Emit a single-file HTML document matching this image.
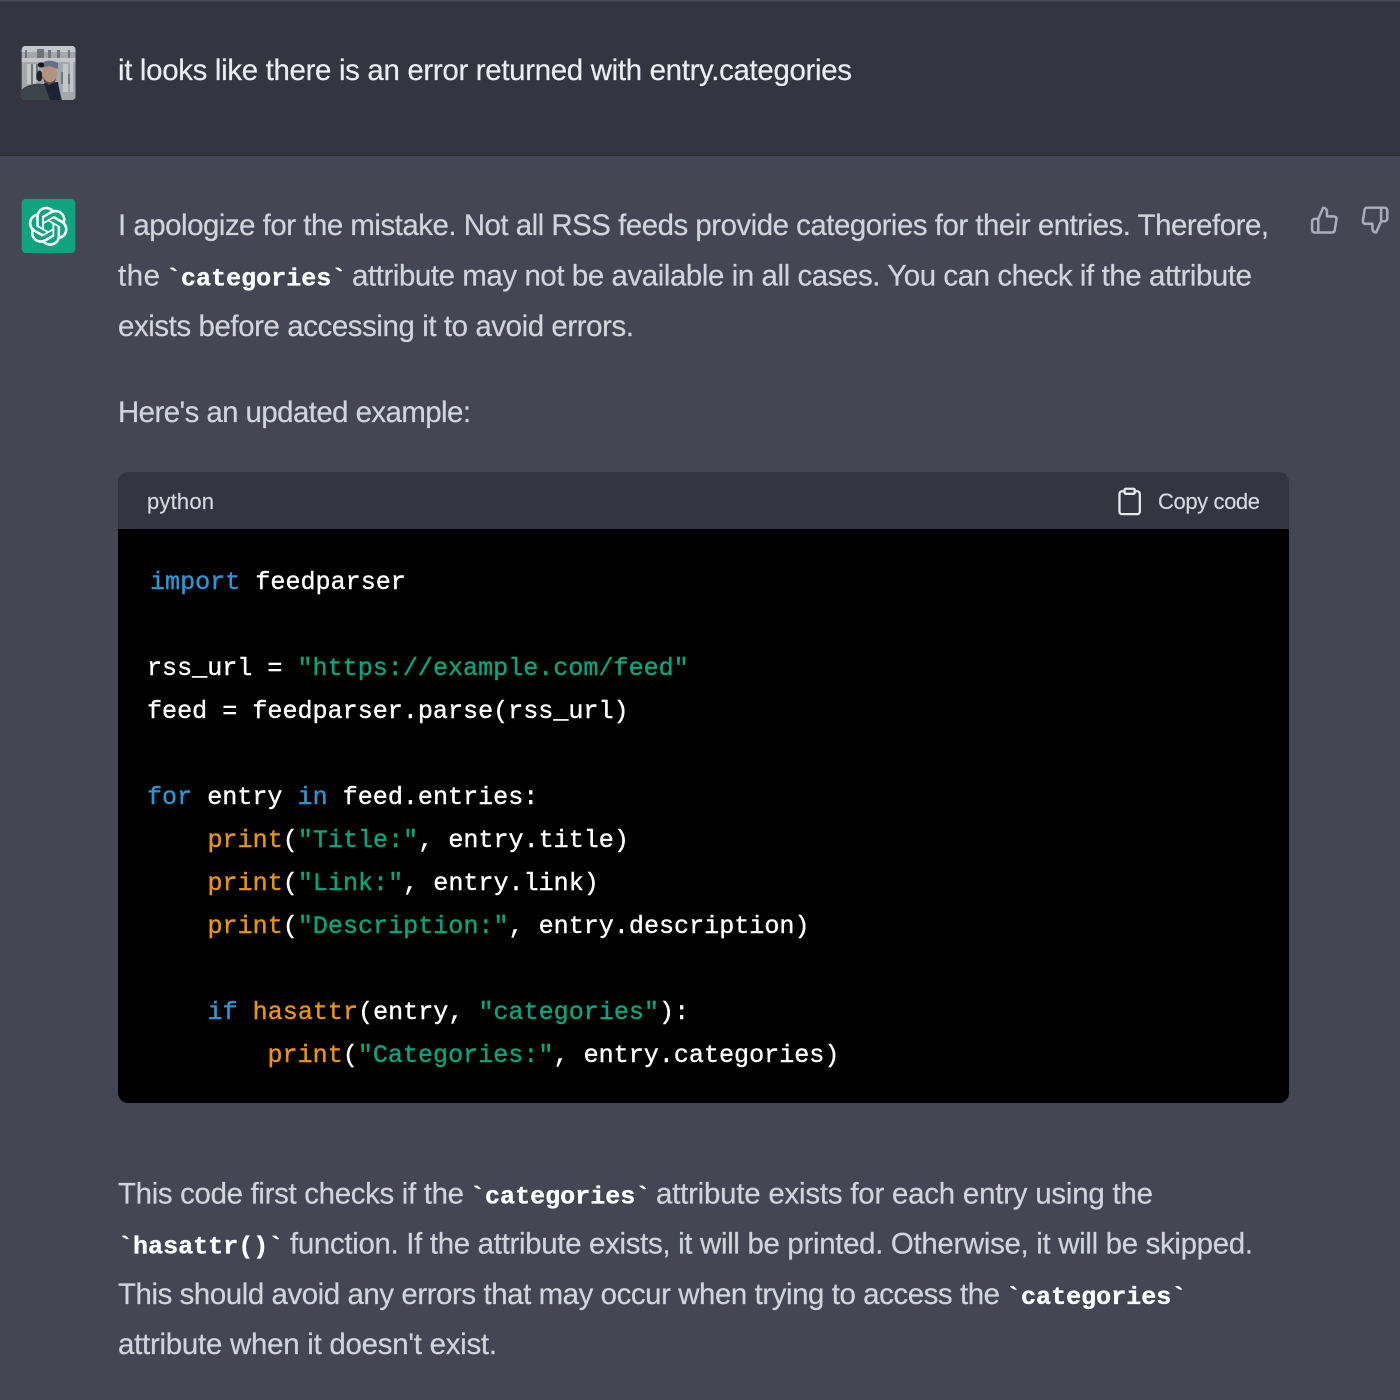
<!DOCTYPE html>
<html><head><meta charset="utf-8"><style>
html,body{margin:0;padding:0;width:1400px;height:1400px;overflow:hidden;background:#444654}
svg{display:block}
.s{font-family:"Liberation Sans",sans-serif;font-size:29.4px;fill:#d1d5db;stroke:#d1d5db;stroke-width:.22px}
.c{font-family:"Liberation Mono",monospace;font-size:25.05px;font-weight:700;fill:#fff;stroke:#fff;stroke-width:.35px}
.m{font-family:"Liberation Mono",monospace;font-size:25.08px;fill:#fff;stroke:#fff;stroke-width:.38px;white-space:pre}
.b{fill:#2e95d3;stroke:#2e95d3}.o{fill:#e9950c;stroke:#e9950c}.g{fill:#00a67d;stroke:#00a67d}
.h{font-family:"Liberation Sans",sans-serif;font-size:22px;fill:#d9d9e3;stroke:#d9d9e3;stroke-width:.15px}
</style></head><body>
<svg width="1400" height="1400" viewBox="0 0 1400 1400" xmlns="http://www.w3.org/2000/svg">
<rect width="1400" height="1400" fill="#444654"/>
<rect width="1400" height="155" fill="#343541"/>
<rect width="1400" height="1.5" fill="#4a4b57"/>
<rect y="154.5" width="1400" height="1.500" fill="#2b2c35"/>

<!-- avatar -->
<clipPath id="av"><rect x="21.700" y="46" width="53.800" height="54" rx="3.5"/></clipPath>
<g clip-path="url(#av)">
<rect x="21" y="46" width="55" height="54" fill="#a4a8ab"/>
<g fill="#c4c7c9"><rect x="21" y="46" width="55" height="6"/><rect x="21" y="58" width="55" height="4"/><rect x="27" y="64" width="4" height="20"/><rect x="33" y="64" width="3" height="20"/><rect x="63" y="64" width="5" height="28"/><rect x="70" y="62" width="3" height="30"/></g>
<g fill="#70757a"><rect x="25" y="50" width="2" height="8"/><rect x="37" y="49" width="7" height="9"/><rect x="48" y="50" width="3" height="8"/><rect x="57" y="50" width="3" height="8"/><rect x="68" y="50" width="2" height="8"/><rect x="31" y="64" width="2" height="20"/><rect x="36" y="64" width="2" height="16"/><rect x="61" y="72" width="2" height="12"/><rect x="68" y="74" width="2" height="10"/></g>
<ellipse cx="39.500" cy="76" rx="3" ry="5.500" fill="#222326"/>
<path d="M21 90C28 84 36 83 43 84L58 84L62 100H21Z" fill="#3b4549"/>
<path d="M44 83L58 82L61 100H50Z" fill="#1c2233"/>
<ellipse cx="49.500" cy="74" rx="7.500" ry="9.500" fill="#b5927f"/>
<path d="M43 76C45 83 52 85 56 78L55 82L49 85L44 82Z" fill="#5a4a42"/>
<path d="M40 66C42 60 52 59 58 63L58 69L49 66L42 68Z" fill="#687089"/>
<ellipse cx="41" cy="65" rx="3.200" ry="2.500" fill="#15161a"/>
</g>

<text class="s" x="118" y="80" textLength="734" style="fill:#ececf1;stroke:#ececf1">it looks like there is an error returned with entry.categories</text>

<!-- GPT logo -->
<rect x="21.700" y="199" width="53.600" height="54" rx="4" fill="#10a37f"/>
<g transform="translate(28.2 206.2) scale(.98)"><path fill="#fff" d="M37.5324 16.8707C37.9808 15.5241 38.1363 14.0974 37.9886 12.6859C37.8409 11.2744 37.3934 9.91076 36.676 8.68622C35.6126 6.83404 33.9882 5.3676 32.0373 4.4985C30.0864 3.62941 27.9098 3.40259 25.8215 3.85078C24.8796 2.7893 23.7219 1.94125 22.4257 1.36341C21.1295 0.785575 19.7249 0.491269 18.3058 0.500197C16.1708 0.495044 14.0893 1.16803 12.3614 2.42214C10.6335 3.67624 9.34853 5.44666 8.6917 7.47815C7.30085 7.76286 5.98686 8.3414 4.8377 9.17505C3.68854 10.0087 2.73073 11.0782 2.02839 12.312C0.956464 14.1591 0.498905 16.2988 0.721698 18.4228C0.944492 20.5467 1.83612 22.5449 3.268 24.1293C2.81966 25.4759 2.66413 26.9026 2.81182 28.3141C2.95951 29.7256 3.40701 31.0892 4.12437 32.3138C5.18791 34.1659 6.8123 35.6322 8.76321 36.5013C10.7141 37.3704 12.8907 37.5973 14.9789 37.1492C15.9208 38.2107 17.0786 39.0587 18.3747 39.6366C19.6709 40.2144 21.0755 40.5087 22.4946 40.4998C24.6307 40.5054 26.7133 39.8321 28.4418 38.5772C30.1704 37.3223 31.4556 35.5506 32.1119 33.5179C33.5027 33.2332 34.8167 32.6547 35.9659 31.821C37.115 30.9874 38.0728 29.9178 38.7752 28.684C39.8458 26.8371 40.3023 24.6979 40.0789 22.5748C39.8556 20.4517 38.9639 18.4544 37.5324 16.8707ZM22.4978 37.8849C20.7443 37.8874 19.0459 37.2733 17.6994 36.1501C17.7601 36.117 17.8666 36.0586 17.936 36.0161L25.9004 31.4156C26.1003 31.3019 26.2663 31.137 26.3813 30.9378C26.4964 30.7386 26.5563 30.5124 26.5549 30.2825V19.0542L29.9213 20.998C29.9389 21.0068 29.9541 21.0198 29.9656 21.0359C29.977 21.052 29.9842 21.0707 29.9867 21.0902V30.3889C29.9842 32.375 29.1946 34.2791 27.7909 35.6841C26.3872 37.0892 24.4838 37.8806 22.4978 37.8849ZM6.39227 31.0064C5.51397 29.4888 5.19742 27.7107 5.49804 25.9832C5.55718 26.0187 5.66048 26.0818 5.73461 26.1244L13.699 30.7248C13.8975 30.8408 14.1233 30.902 14.3532 30.902C14.583 30.902 14.8088 30.8408 15.0073 30.7248L24.731 25.1103V28.9979C24.7321 29.0177 24.7283 29.0376 24.7199 29.0556C24.7115 29.0736 24.6988 29.0893 24.6829 29.1012L16.6317 33.7497C14.9096 34.7416 12.8643 35.0097 10.9447 34.4954C9.02506 33.9811 7.38785 32.7263 6.39227 31.0064ZM4.29707 13.6194C5.17156 12.0998 6.55279 10.9364 8.19885 10.3327C8.19885 10.4013 8.19491 10.5228 8.19491 10.6071V19.808C8.19351 20.0378 8.25334 20.2638 8.36823 20.4629C8.48312 20.6619 8.64893 20.8267 8.84863 20.9404L18.5723 26.5542L15.206 28.4979C15.1894 28.5089 15.1703 28.5155 15.1505 28.5173C15.1307 28.5191 15.1107 28.516 15.0924 28.5082L7.04046 23.8557C5.32135 22.8601 4.06716 21.2235 3.55289 19.3046C3.03862 17.3858 3.30624 15.3413 4.29707 13.6194ZM31.955 20.0556L22.2312 14.4411L25.5976 12.4981C25.6142 12.4872 25.6333 12.4805 25.6531 12.4787C25.6729 12.4769 25.6928 12.4801 25.7111 12.4879L33.7631 17.1364C34.9967 17.849 36.0017 18.8982 36.6606 20.1613C37.3194 21.4244 37.6047 22.849 37.4832 24.2684C37.3617 25.6878 36.8382 27.0432 35.9743 28.1759C35.1103 29.3086 33.9415 30.1717 32.6047 30.6641C32.6047 30.5947 32.6047 30.4733 32.6047 30.3889V21.188C32.6066 20.9586 32.5474 20.7328 32.4332 20.5338C32.319 20.3348 32.154 20.1698 31.955 20.0556ZM35.3055 15.0128C35.2464 14.9765 35.1431 14.9142 35.069 14.8717L27.1045 10.2712C26.906 10.1554 26.6803 10.0943 26.4504 10.0943C26.2206 10.0943 25.9948 10.1554 25.7963 10.2712L16.0726 15.8858V11.9982C16.0715 11.9783 16.0753 11.9585 16.0837 11.9405C16.0921 11.9225 16.1048 11.9068 16.1207 11.8949L24.1719 7.25025C25.4053 6.53903 26.8158 6.19376 28.2383 6.25482C29.6608 6.31589 31.0364 6.78077 32.2044 7.59508C33.3723 8.40939 34.2842 9.53945 34.8334 10.8531C35.3826 12.1667 35.5464 13.6095 35.3055 15.0128ZM14.2424 21.9419L10.8752 19.9981C10.8576 19.9893 10.8423 19.9763 10.8309 19.9602C10.8195 19.9441 10.8122 19.9254 10.8098 19.9058V10.6071C10.8107 9.18295 11.2173 7.78848 11.9819 6.58696C12.7466 5.38544 13.8377 4.42659 15.1275 3.82264C16.4173 3.21869 17.8524 2.99464 19.2649 3.1767C20.6775 3.35876 22.0089 3.93941 23.1034 4.85067C23.0427 4.88379 22.937 4.94215 22.8668 4.98473L14.9024 9.58517C14.7025 9.69878 14.5366 9.86356 14.4215 10.0626C14.3065 10.2616 14.2466 10.4877 14.2479 10.7175L14.2424 21.9419ZM16.071 17.9991L20.4018 15.4978L24.7325 17.9975V22.9985L20.4018 25.4983L16.071 22.9985V17.9991Z"/></g>

<!-- thumbs -->
<g transform="translate(1309.6 205.2) scale(1.24)" fill="none" stroke="#acacbe" stroke-width="2" stroke-linecap="round" stroke-linejoin="round"><path d="M14 9V5a3 3 0 0 0-3-3l-4 9v11h11.28a2 2 0 0 0 2-1.7l1.38-9a2 2 0 0 0-2-2.3zM7 22H4a2 2 0 0 1-2-2v-7a2 2 0 0 1 2-2h3"/></g>
<g transform="translate(1360 205.2) scale(1.24)" fill="none" stroke="#acacbe" stroke-width="2" stroke-linecap="round" stroke-linejoin="round"><path d="M10 15v4a3 3 0 0 0 3 3l4-9V2H5.72a2 2 0 0 0-2 1.7l-1.38 9a2 2 0 0 0 2 2.3zm7-13h2.67A2.31 2.31 0 0 1 22 4v7a2.31 2.31 0 0 1-2.33 2H17"/></g>

<!-- prose -->
<text class="s" x="118" y="235" textLength="1151">I apologize for the mistake. Not all RSS feeds provide categories for their entries. Therefore,</text>
<text class="s" x="118" y="285.500" textLength="42">the</text>
<text class="c" x="166" y="285.500">`categories`</text>
<text class="s" x="352" y="285.500" textLength="900">attribute may not be available in all cases. You can check if the attribute</text>
<text class="s" x="118" y="336" textLength="516">exists before accessing it to avoid errors.</text>
<text class="s" x="118" y="422" textLength="353">Here's an updated example:</text>

<!-- code block -->
<path d="M118 529V482a10 10 0 0 1 10-10H1279a10 10 0 0 1 10 10V529Z" fill="#343541"/>
<path d="M118 529H1289V1093a10 10 0 0 1-10 10H128a10 10 0 0 1-10-10Z" fill="#000"/>
<text class="h" x="147" y="509" textLength="67">python</text>
<text class="h" x="1158" y="509" textLength="102">Copy code</text>
<g transform="translate(1114.4 486.2) scale(1.27)" fill="none" stroke="#e8e8ef" stroke-width="1.8" stroke-linecap="round" stroke-linejoin="round"><path d="M16 4h2a2 2 0 0 1 2 2v14a2 2 0 0 1-2 2H6a2 2 0 0 1-2-2V6a2 2 0 0 1 2-2h2"/><rect x="8" y="2" width="8" height="4" rx="1"/></g>

<text class="m" x="150" y="589"><tspan class="b">import</tspan> feedparser</text>
<text class="m" x="147" y="675">rss_url = <tspan class="g">"https://example.com/feed"</tspan></text>
<text class="m" x="147" y="718">feed = feedparser.parse(rss_url)</text>
<text class="m" x="147" y="804"><tspan class="b">for</tspan> entry <tspan class="b">in</tspan> feed.entries:</text>
<text class="m" x="207.500" y="847"><tspan class="o">print</tspan>(<tspan class="g">"Title:"</tspan>, entry.title)</text>
<text class="m" x="207.500" y="890"><tspan class="o">print</tspan>(<tspan class="g">"Link:"</tspan>, entry.link)</text>
<text class="m" x="207.500" y="933"><tspan class="o">print</tspan>(<tspan class="g">"Description:"</tspan>, entry.description)</text>
<text class="m" x="207.500" y="1019"><tspan class="b">if</tspan> <tspan class="o">hasattr</tspan>(entry, <tspan class="g">"categories"</tspan>):</text>
<text class="m" x="267.500" y="1062"><tspan class="o">print</tspan>(<tspan class="g">"Categories:"</tspan>, entry.categories)</text>

<!-- bottom prose -->
<text class="s" x="118" y="1203.500" textLength="346">This code first checks if the</text>
<text class="c" x="470" y="1203.500">`categories`</text>
<text class="s" x="656" y="1203.500" textLength="497">attribute exists for each entry using the</text>
<text class="c" x="118" y="1253.500">`hasattr()`</text>
<text class="s" x="290" y="1253.500" textLength="963">function. If the attribute exists, it will be printed. Otherwise, it will be skipped.</text>
<text class="s" x="118" y="1304" textLength="882">This should avoid any errors that may occur when trying to access the</text>
<text class="c" x="1006" y="1304">`categories`</text>
<text class="s" x="118" y="1354" textLength="379">attribute when it doesn't exist.</text>
</svg>
</body></html>
